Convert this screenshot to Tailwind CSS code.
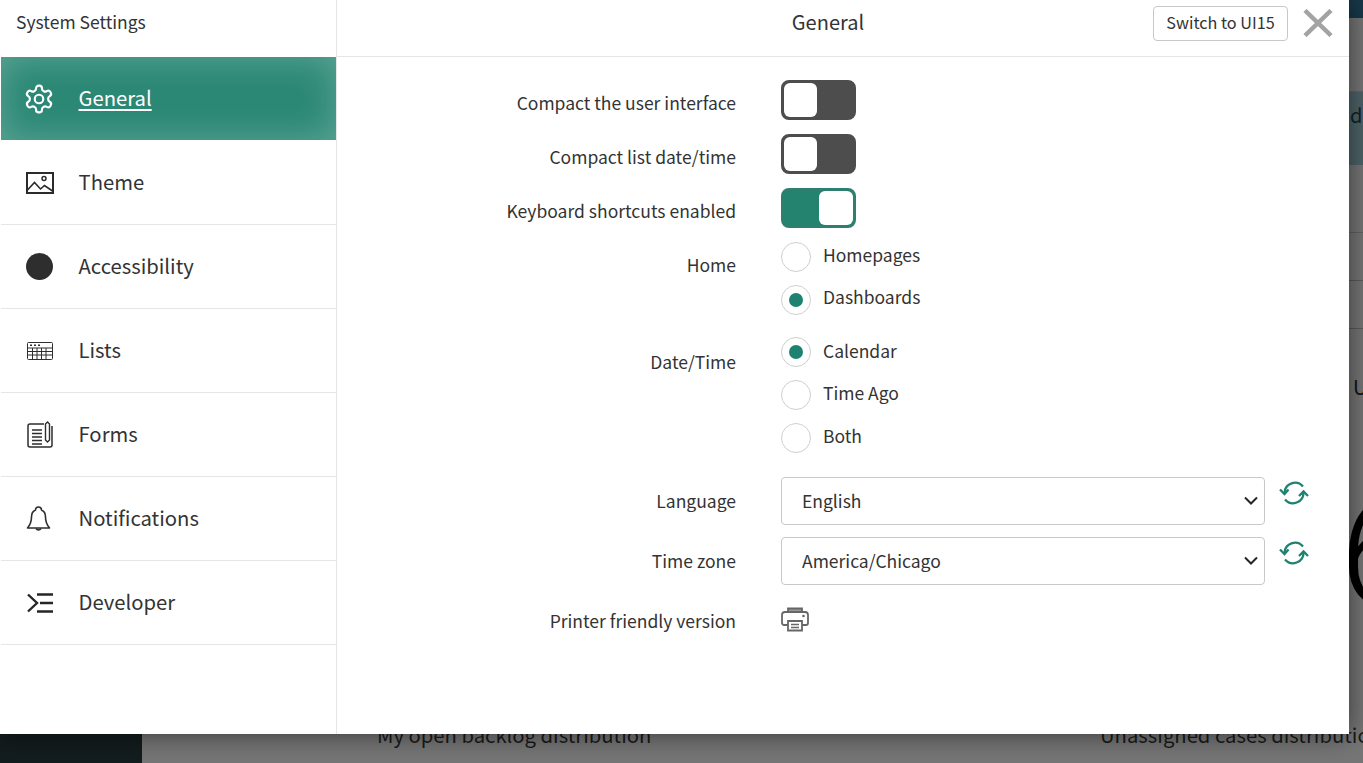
<!DOCTYPE html>
<html lang="en">
<head>
    <meta charset="UTF-8">
    <meta name="viewport" content="width=device-width, initial-scale=1.0">
    <title>System Settings</title>
    <script src="https://cdn.jsdelivr.net/npm/@tailwindcss/browser@4"></script>
</head>
<body class="font-['Noto_Sans_CJK_SC',sans-serif] text-[#333]">
<div class="relative w-[1363px] h-[763px] overflow-hidden bg-[#767676]">

    <!-- page behind the dialog -->
    <div class="flex h-full">
        <div class="w-[142px] shrink-0 bg-[#131c1e]"></div>
        <div class="flex-1 min-w-0 flex flex-col">
            <div class="h-[18px] bg-[#17384a]"></div>
            <div class="h-[74px] border-b border-[#666]"></div>
            <div class="h-[73px] bg-[#4e6468] pl-[1208px] text-[20px] leading-[46px] text-[#10222c] whitespace-nowrap">di</div>
            <div class="h-[68px] border-b border-[#636363]"></div>
            <div class="h-[48px] border-b border-[#5c5c5c]"></div>
            <div class="h-[48px] border-b border-[#5c5c5c]"></div>
            <div class="h-[56px] pl-[1211px] pt-[44px] text-[20px] leading-[28px] text-[#111]">U</div>
            <div class="h-[120px] pl-[1197px] pt-[107px] font-['Roboto',sans-serif] font-light text-[155px] leading-[120px] text-black">6</div>
            <div class="mt-auto grid grid-cols-[723px_1fr] pl-[235px] h-[42px] text-[20.25px] leading-[28px] text-[#1a1a1a] whitespace-nowrap overflow-hidden">
                <span>My open backlog distribution</span>
                <span>Unassigned cases distribution</span>
            </div>
        </div>
    </div>

    <!-- dialog -->
    <div class="absolute left-0 top-0 w-[1349px] h-[734px] bg-white flex shadow-[0_0_26px_rgba(0,0,0,0.55)]">
        <aside class="w-[337px] border-r border-[#e6e6e6] pl-px text-[20.25px]">
            <div class="h-[57px] pl-[15px] pb-[12px] flex items-center text-[17.5px]">System Settings</div>
            <a class="h-[83px] mb-px flex items-center text-white bg-[#2b8875] shadow-[inset_0_0_36px_rgba(255,255,255,0.25)]">
                <span class="w-[77.500px] flex pl-[22px]">
                    <svg class="w-[32px] h-[32px]" viewBox="0 0 24 24" fill="none" stroke="currentColor" stroke-width="1.6" stroke-linejoin="round"><path d="M12.22 2h-.44a2 2 0 0 0-2 2v.18a2 2 0 0 1-1 1.73l-.43.25a2 2 0 0 1-2 0l-.15-.08a2 2 0 0 0-2.73.73l-.22.38a2 2 0 0 0 .73 2.73l.15.1a2 2 0 0 1 1 1.72v.51a2 2 0 0 1-1 1.74l-.15.09a2 2 0 0 0-.73 2.73l.22.38a2 2 0 0 0 2.73.73l.15-.08a2 2 0 0 1 2 0l.43.25a2 2 0 0 1 1 1.73V20a2 2 0 0 0 2 2h.44a2 2 0 0 0 2-2v-.18a2 2 0 0 1 1-1.73l.43-.25a2 2 0 0 1 2 0l.15.08a2 2 0 0 0 2.73-.73l.22-.39a2 2 0 0 0-.73-2.73l-.15-.08a2 2 0 0 1-1-1.74v-.5a2 2 0 0 1 1-1.74l.15-.09a2 2 0 0 0 .73-2.73l-.22-.38a2 2 0 0 0-2.73-.73l-.15.08a2 2 0 0 1-2 0l-.43-.25a2 2 0 0 1-1-1.73V4a2 2 0 0 0-2-2z"/><circle cx="12" cy="12" r="3.2"/></svg>
                </span>
                <span class="-mt-[1px] underline underline-offset-[3px] decoration-2">General</span>
            </a>
            <a class="h-[84px] flex items-center border-b border-[#e6e6e6]">
                <span class="w-[77.500px] flex pl-[25px]">
                    <svg class="w-[28px] h-[22px]" viewBox="0 0 28 22" fill="none" stroke="#2b2b2b" stroke-width="2"><rect x="1" y="1" width="26" height="20"/><path d="M1.500 18l7-7.500 6 6.500 4-3.500 8 5.500" stroke-width="1.6"/><circle cx="18" cy="6.500" r="2" stroke-width="1.5"/></svg>
                </span>
                <span class="-mt-[1px]">Theme</span>
            </a>
            <a class="h-[84px] flex items-center border-b border-[#e6e6e6]">
                <span class="w-[77.500px] flex pl-[25px]">
                    <span class="w-[27px] h-[27px] rounded-full bg-[#2e2e2e]"></span>
                </span>
                <span class="-mt-[1px]">Accessibility</span>
            </a>
            <a class="h-[84px] flex items-center border-b border-[#e6e6e6]">
                <span class="w-[77.500px] flex pl-[26px]">
                    <svg class="w-[26px] h-[18px]" viewBox="0 0 26 18" fill="none" stroke="#2e2e2e"><rect x="0.5" y="0.5" width="25" height="17" rx="1"/><path d="M1 6h24M1 9.500h24M1 13h24M5.500 6v11M10 6v11M14.500 6v11M19 6v11"/><path d="M3 3.200h2M7 3.200h2M11 3.200h2" stroke-width="1.5"/></svg>
                </span>
                <span class="-mt-[1px]">Lists</span>
            </a>
            <a class="h-[84px] flex items-center border-b border-[#e6e6e6]">
                <span class="w-[77.500px] flex pl-[26px]">
                    <svg class="w-[26px] h-[27px]" viewBox="0 0 26 27" fill="none" stroke="#2e2e2e" stroke-width="1.5"><path d="M17 3H3a2 2 0 0 0-2 2v19a2 2 0 0 0 2 2h20a2 2 0 0 0 2-2V5"/><path d="M5 9h10M5 12.500h10M5 16h10M5 19.500h10M5 23h10" stroke-width="1.6"/><path d="M18.500 19V3l2-2 2 2v16l-2 2z" stroke-width="1.400"/></svg>
                </span>
                <span class="-mt-[1px]">Forms</span>
            </a>
            <a class="h-[84px] flex items-center border-b border-[#e6e6e6]">
                <span class="w-[77.500px] flex pl-[25px]">
                    <svg class="w-[26px] h-[28px]" viewBox="0 0 26 28" fill="none" stroke="#2e2e2e" stroke-width="1.600" stroke-linejoin="round"><path d="M9.500 5a3 3 0 1 1 6 0c3 1.200 4 3.500 4 7 0 5 1.500 8 4 11H1.500c2.500-3 4-6 4-11 0-3.500 1-5.800 4-7z"/><path d="M10 23.500a3 3 0 0 0 5 0"/></svg>
                </span>
                <span class="-mt-[1px]">Notifications</span>
            </a>
            <a class="h-[84px] flex items-center border-b border-[#e6e6e6]">
                <span class="w-[77.500px] flex pl-[26px]">
                    <svg class="w-[27px] h-[20px]" viewBox="0 0 27 20" fill="none" stroke="#262626" stroke-width="2.400"><path d="M1 1.500l9 8.500-9 8.500"/><path d="M10 1.500h16M13 10h13M10 18.500h16"/></svg>
                </span>
                <span class="-mt-[1px]">Developer</span>
            </a>
        </aside>

        <main class="flex-1 flex flex-col">
            <header class="h-[57px] flex border-b border-[#e6e6e6]">
                <h1 class="flex-1 pl-[166px] pb-[12px] text-center text-[20px] self-center leading-[34px]">General</h1>
                <button class="mt-[6px] w-[135px] h-[35px] pb-[2px] border border-[#c8c8c8] rounded-[4px] text-[16.2px] leading-none">Switch to UI15</button>
                <span class="ml-[15px] mr-[16px] mt-[9px]">
                    <svg class="w-[30px] h-[28px]" viewBox="0 0 30 28" stroke="#a3a3a3" stroke-width="4.500"><path d="M2 1.500l26 25M28 1.500L2 26.500"/></svg>
                </span>
            </header>

            <form class="pt-[23px] grid grid-cols-[399px_484px_1fr] gap-x-[45px] text-[17.5px]">
                <label class="text-right leading-[46px] h-[40px]">Compact the user interface</label>
                <div class="col-span-2 w-[75px] h-[40px] rounded-lg border-[3px] border-[#4d4d4d] bg-[#4d4d4d]">
                    <div class="w-[33px] h-[34px] rounded-md bg-white"></div>
                </div>

                <label class="mt-[14px] text-right leading-[46px] h-[40px]">Compact list date/time</label>
                <div class="mt-[14px] col-span-2 w-[75px] h-[40px] rounded-lg border-[3px] border-[#4d4d4d] bg-[#4d4d4d]">
                    <div class="w-[33px] h-[34px] rounded-md bg-white"></div>
                </div>

                <label class="mt-[14px] text-right leading-[46px] h-[40px]">Keyboard shortcuts enabled</label>
                <div class="mt-[14px] col-span-2 w-[75px] h-[40px] rounded-lg border-[3px] border-[#2f7f70] bg-[#23836f] flex justify-end">
                    <div class="w-[34px] h-[34px] rounded-md bg-white"></div>
                </div>

                <label class="mt-[14px] text-right pt-[10px] leading-[26px]">Home</label>
                <div class="mt-[14px] col-span-2 flex flex-col gap-[13px]">
                    <div class="flex items-center gap-[12px] h-[30px]"><span class="w-[30px] h-[30px] rounded-full border border-[#cfcfcf]"></span><span class="-mt-[4px]">Homepages</span></div>
                    <div class="flex items-center gap-[12px] h-[30px]"><span class="w-[30px] h-[30px] rounded-full border border-[#cfcfcf] flex items-center justify-center"><span class="w-[14px] h-[14px] rounded-full bg-[#1f8270]"></span></span><span class="-mt-[5px]">Dashboards</span></div>
                </div>

                <label class="mt-[22px] text-right pt-[12px] leading-[26px]">Date/Time</label>
                <div class="mt-[22px] col-span-2 flex flex-col gap-[13px]">
                    <div class="flex items-center gap-[12px] h-[30px]"><span class="w-[30px] h-[30px] rounded-full border border-[#cfcfcf] flex items-center justify-center"><span class="w-[14px] h-[14px] rounded-full bg-[#1f8270]"></span></span><span class="-mt-[2px]">Calendar</span></div>
                    <div class="flex items-center gap-[12px] h-[30px]"><span class="w-[30px] h-[30px] rounded-full border border-[#cfcfcf]"></span><span class="-mt-[4px]">Time Ago</span></div>
                    <div class="flex items-center gap-[12px] h-[30px]"><span class="w-[30px] h-[30px] rounded-full border border-[#cfcfcf]"></span><span class="-mt-[4px]">Both</span></div>
                </div>

                <label class="mt-[24px] text-right leading-[48px]">Language</label>
                <div class="relative mt-[24px]">
                    <select class="w-full h-[48px] pl-[20px] appearance-none border border-[#c8c8c8] rounded-[4px] bg-white"><option>English</option></select>
                    <svg class="absolute right-[7px] top-[19px] w-[14px] h-[9px]" viewBox="0 0 14 9" fill="none" stroke="#262626" stroke-width="2"><path d="M1 1.500l6 6 6-6"/></svg>
                </div>
                <span class="mt-[26px] -ml-[32px]">
                    <svg class="w-[32px] h-[28px]" viewBox="0 0 32 28" fill="none" stroke="#1f8270" stroke-width="2.300"><path d="M25 7.500a10.500 10.500 0 0 0-18.500 6.500M7 20.500a10.500 10.500 0 0 0 18.500-7"/><path d="M2 10.500l4.500 4.500 4-4.500M21 17l4.500-4.500 4.500 4.500"/></svg>
                </span>

                <label class="mt-[12px] text-right leading-[48px]">Time zone</label>
                <div class="relative mt-[12px]">
                    <select class="w-full h-[48px] pl-[20px] appearance-none border border-[#c8c8c8] rounded-[4px] bg-white"><option>America/Chicago</option></select>
                    <svg class="absolute right-[7px] top-[19px] w-[14px] h-[9px]" viewBox="0 0 14 9" fill="none" stroke="#262626" stroke-width="2"><path d="M1 1.500l6 6 6-6"/></svg>
                </div>
                <span class="mt-[14px] -ml-[32px]">
                    <svg class="w-[32px] h-[28px]" viewBox="0 0 32 28" fill="none" stroke="#1f8270" stroke-width="2.300"><path d="M25 7.500a10.500 10.500 0 0 0-18.500 6.500M7 20.500a10.500 10.500 0 0 0 18.500-7"/><path d="M2 10.500l4.500 4.500 4-4.500M21 17l4.500-4.500 4.500 4.500"/></svg>
                </span>

                <label class="mt-[22px] text-right leading-[28px]">Printer friendly version</label>
                <span class="mt-[22px] col-span-2">
                    <svg class="w-[28px] h-[25px]" viewBox="0 0 28 25" fill="none" stroke="#666" stroke-width="1.800"><path d="M7 5V1.500h14V5" fill="#999"/><path d="M7 18H3a2 2 0 0 1-2-2V8a3 3 0 0 1 3-3h20a3 3 0 0 1 3 3v8a2 2 0 0 1-2 2h-4"/><path d="M7 14h14v9.500H7z"/><path d="M10 17.500h8M10 20.500h8" stroke-width="1.400"/><circle cx="22.500" cy="9" r="1.300" fill="#666" stroke="none"/></svg>
                </span>
            </form>
        </main>
    </div>
</div>
</body>
</html>
